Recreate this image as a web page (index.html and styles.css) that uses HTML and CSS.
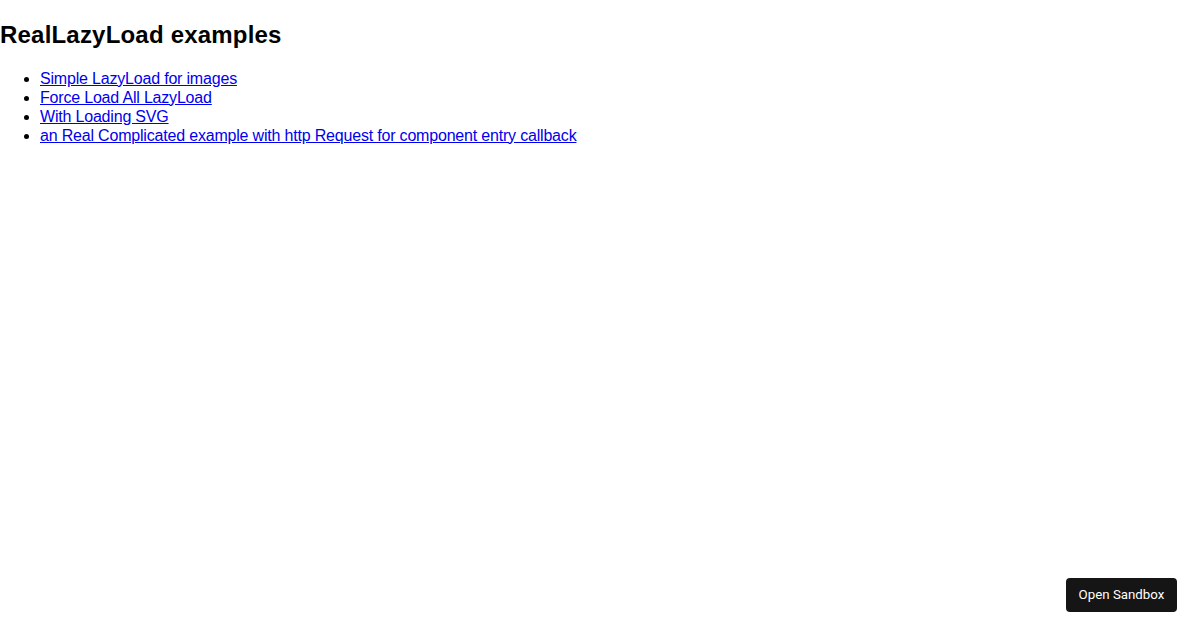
FILE: index.html
```html
<!DOCTYPE html>
<html>
<head>
<meta charset="utf-8">
<link rel="stylesheet" href="styles.css">
</head>
<body>
<h2 class="title">RealLazyLoad examples</h2>
<ul class="links">
  <li><a href="#">Simple LazyLoad for images</a></li>
  <li><a href="#">Force Load All LazyLoad</a></li>
  <li><a href="#">With Loading SVG</a></li>
  <li><a href="#">an Real Complicated example with http Request for component entry callback</a></li>
</ul>
<a class="sandbox-btn" href="#">Open Sandbox</a>
</body>
</html>
```
FILE: styles.css
```css
body {
  margin: 0;
  font-family: "Liberation Sans", Arial, sans-serif;
  background: #fff;
  color: #000;
}
.title {
  font-size: 24px;
  font-weight: bold;
  letter-spacing: 0.2px;
  line-height: 29px;
  margin: 19.92px 0;
}
.links {
  margin: 19px 0;
  padding-left: 40px;
  font-size: 16px;
  line-height: 19px;
  letter-spacing: -0.19px;
}
.links a {
  color: #0000ee;
}
.sandbox-btn {
  position: fixed;
  right: 23px;
  bottom: 18px;
  width: 111px;
  height: 34px;
  box-sizing: border-box;
  display: flex;
  align-items: center;
  justify-content: center;
  padding-bottom: 2px;
  background: #151515;
  color: #fff;
  border-radius: 4px;
  font-family: Roboto, "Liberation Sans", sans-serif;
  font-size: 13.3px;
  text-decoration: none;
}
```
